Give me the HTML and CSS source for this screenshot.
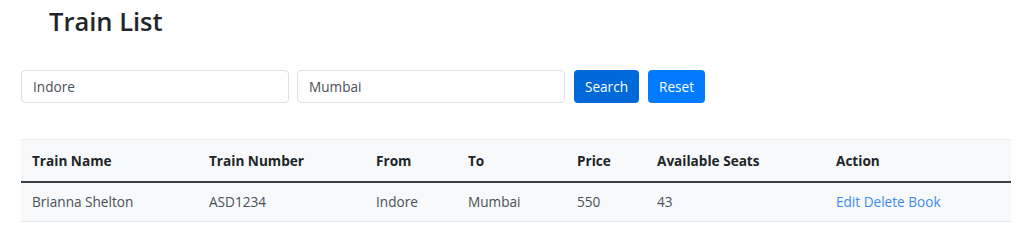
FILE: index.html
```html
<!DOCTYPE html>
<html>
<head>
<meta charset="utf-8">
<link rel="stylesheet" href="styles.css">
</head>
<body>
<div class="page">
  <h2 class="title">Train List</h2>
  <form class="search">
    <input class="field" type="text" value="Indore">
    <input class="field" type="text" value="Mumbai">
    <button type="button" class="btn btn-search">Search</button>
    <button type="button" class="btn btn-reset">Reset</button>
  </form>
  <table class="trains">
    <colgroup>
      <col class="c1"><col class="c2"><col class="c3"><col class="c4"><col class="c5"><col class="c6"><col class="c7">
    </colgroup>
    <thead>
      <tr><th>Train Name</th><th>Train Number</th><th>From</th><th>To</th><th>Price</th><th>Available Seats</th><th>Action</th></tr>
    </thead>
    <tbody>
      <tr><td>Brianna Shelton</td><td>ASD1234</td><td>Indore</td><td>Mumbai</td><td>550</td><td>43</td>
        <td><a href="#" class="act">Edit</a> <a href="#" class="act">Delete</a> <a href="#" class="act">Book</a></td></tr>
    </tbody>
  </table>
</div>
</body>
</html>
```
FILE: styles.css
```css
* { box-sizing: border-box; }
body {
  margin: 0;
  font-family: "Open Sans", "Noto Sans", sans-serif;
  color: #212529;
  background: #fff;
}
.page {
  padding: 0 13px 0 21px;
}
.title {
  margin: 0 0 0 28px;
  padding-top: 3px;
  font-size: 25.5px;
  font-weight: 600;
  line-height: 36px;
  color: #212529;
}
.search {
  display: flex;
  gap: 8px;
  margin-top: 31px;
  height: 33px;
}
.field {
  width: 268px;
  height: 33px;
  border: 1px solid #dcdfe3;
  border-radius: 4px;
  padding: 0 11px;
  font-family: inherit;
  font-size: 13.6px;
  color: #495057;
}
.btn {
  height: 33px;
  border: none;
  border-radius: 4px;
  color: #fff;
  font-family: inherit;
  font-size: 13.6px;
  padding: 0 10px;
}
.btn-search { background: #0069d9; width: 65px; margin-left: 1px; }
.btn-reset { background: #007bff; width: 57px; margin-left: 1px; }
.trains {
  margin-top: 36px;
  width: 990px;
  border-collapse: collapse;
  table-layout: fixed;
  font-size: 13.6px;
}
.c1 { width: 177px; }
.c2 { width: 167px; }
.c3 { width: 92px; }
.c4 { width: 109px; }
.c5 { width: 80px; }
.c6 { width: 179px; }
.c7 { width: 186px; }
.trains th, .trains td {
  text-align: left;
  padding: 0 11px;
}
.trains thead tr {
  background: #f8f9fa;
  border-top: 1px solid #e9ecef;
  border-bottom: 2px solid #3a3d41;
  height: 42px;
}
.trains th { font-weight: 700; color: #212529; }
.trains tbody tr {
  background: #f8f9fa;
  border-bottom: 1px solid #e3e6e9;
  height: 40px;
}
.trains td { color: #495057; }
.act { color: #3d8bf2; text-decoration: none; }
```
